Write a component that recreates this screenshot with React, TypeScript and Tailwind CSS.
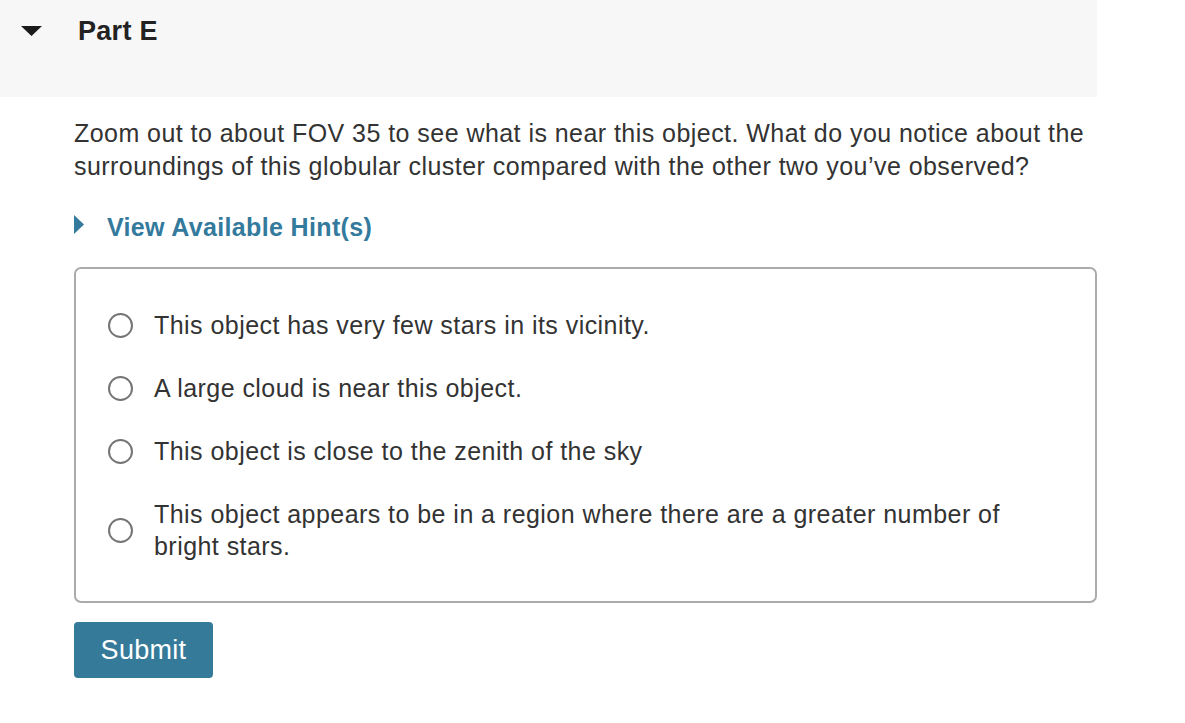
import React from 'react';

const options = [
    'This object has very few stars in its vicinity.',
    'A large cloud is near this object.',
    'This object is close to the zenith of the sky',
    'This object appears to be in a region where there are a greater number of bright stars.',
];

export default function App() {
    return (
        <div className="min-h-screen bg-white text-[#333] [font-family:'Liberation_Sans',Arial,sans-serif]">
            <div className="w-[1097px] h-[97px] bg-[#f7f7f7] flex items-start pt-[14px]">
                <div className="w-[78px] flex items-center h-[34px] pl-[21px]">
                    <svg width="21" height="10" viewBox="0 0 21 10" className="block">
                        <polygon points="0,0 21,0 10.5,10" fill="#1a1a1a" />
                    </svg>
                </div>
                <h2 className="text-[27px] leading-[34px] font-bold tracking-[0.3px] text-[#222]">Part E</h2>
            </div>

            <div className="w-[1097px] pl-[74px]">
                <p className="mt-[20px] text-[25px] leading-[33px] tracking-[0.45px]">
                    Zoom out to about FOV 35 to see what is near this object. What do you notice about the surroundings of this globular cluster compared with the other two you’ve observed?
                </p>

                <button className="mt-[28px] flex items-center h-[33px] text-[#337a9d]">
                    <svg width="10" height="19" viewBox="0 0 10 19" className="block -mt-[7px]">
                        <polygon points="0,0 10,9.5 0,19" fill="#337a9d" />
                    </svg>
                    <span className="ml-[23px] text-[25px] font-bold leading-[33px] tracking-[0.35px]">View Available Hint(s)</span>
                </button>

                <div className="mt-[23px] border-2 border-[#ababab] rounded-[7px] pt-[40px] pb-[39px] pl-[32px] pr-[40px] flex flex-col gap-[31px]">
                    {options.map((o) => (
                        <label key={o} className="flex items-center">
                            <span className="w-[25px] h-[25px] rounded-full border-2 border-[#757575] bg-white shrink-0" />
                            <span className="ml-[21px] text-[25px] leading-[32px] tracking-[0.45px]">{o}</span>
                        </label>
                    ))}
                </div>

                <button className="mt-[19px] w-[139px] h-[56px] rounded-[4px] bg-[#367a9a] text-white text-[27px] tracking-[0.3px] flex items-center justify-center">
                    Submit
                </button>
            </div>
        </div>
    );
}
